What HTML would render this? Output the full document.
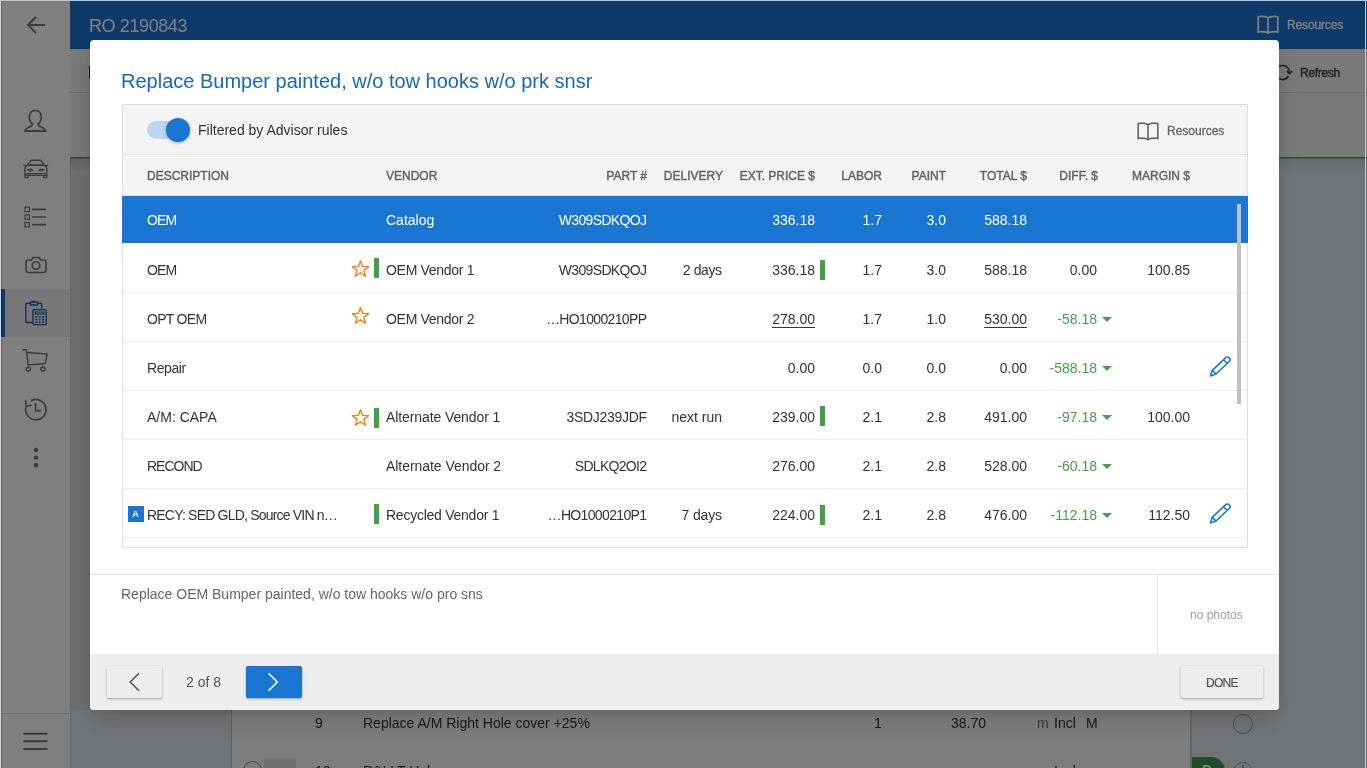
<!DOCTYPE html>
<html><head><meta charset="utf-8">
<style>
*{box-sizing:border-box;margin:0;padding:0}
html,body{width:1367px;height:768px;overflow:hidden;font-family:"Liberation Sans",sans-serif;background:#e5e6e8;position:relative}
.a{position:absolute}
.t{position:absolute;white-space:nowrap}
/* underlying */
#side{left:0;top:0;width:70px;height:768px;background:#fff}
#hdr{left:70px;top:0;width:1297px;height:49px;background:#1a74d0}
#tb{left:70px;top:49px;width:1297px;height:44px;background:#f2f2f2;border-bottom:1px solid #d4d4d4}
#band{left:70px;top:93px;width:1297px;height:65px;background:#f2f2f2;border-bottom:1px solid #4a9f50;box-shadow:0 1px 0 rgba(76,175,80,.45)}
#card{left:231px;top:642px;width:961px;height:128px;background:#fafafa;border-left:1px solid #c4c4c4;border-right:2px solid #c8c8c8}
#ov{left:0;top:0;width:1367px;height:768px;background:rgba(0,0,0,.5)}
/* modal */
#modal{left:90px;top:40px;width:1189px;height:670px;background:linear-gradient(#fff 0,#fff 614px,#eee 614px);border-radius:4px;box-shadow:0 14px 24px -4px rgba(0,0,0,.14),0 2px 12px rgba(0,0,0,.1);overflow:hidden}
#title{left:31px;top:27px;font-size:20px;color:#1567c1;line-height:28px}
#tbl{left:32px;top:64px;width:1126px;height:444px;border:1px solid #dedede;background:#fff}
#tool{left:0;top:0;width:1124px;height:50px;background:#f4f4f4;border-bottom:1px solid #e4e4e4}
#thead{left:0;top:50px;width:1124px;height:41px;background:#f4f4f4;border-bottom:1px solid #dcdcdc}
.th{position:absolute;top:1px;line-height:40px;font-size:12px;color:#666;-webkit-text-stroke:0.45px #666;white-space:nowrap}
.row{position:absolute;left:0;width:1124px;height:49px;border-bottom:1px solid #eeeeee;background:#fff}
.row.sel{background:#1976d2;border-bottom:none;color:#fff}
.c{position:absolute;top:0;line-height:48px;font-size:14px;color:#333;white-space:nowrap}
.sel .c{color:#fff}
.r{text-align:right}
.g{color:#43a047}
.bar{position:absolute;width:5px;height:20px;background:#43a047}
.tri{position:absolute;width:0;height:0;border-left:5px solid transparent;border-right:5px solid transparent;border-top:5px solid #43a047}
.u{text-decoration:underline;text-underline-offset:3px}
#foot{left:0;top:614px;width:1189px;height:56px;background:#eeeeee}
.btn{position:absolute;height:32px;border-radius:2px;box-shadow:0 1px 3px rgba(0,0,0,.25),0 1px 1px rgba(0,0,0,.1)}
</style></head><body>
<div id="root" style="position:absolute;left:0;top:0;width:1367px;height:768px;will-change:transform;overflow:hidden">
<!-- underlying page -->
<div id="side" class="a">
  <svg class="a" style="left:0;top:0" width="70" height="768" viewBox="0 0 70 768" fill="none" stroke="#787878" stroke-width="2">
    <path d="M45 25 H28 M36 17 L28 25 L36 33" stroke-width="2"/>
    <g stroke-width="1.8">
      <path d="M35.2 110.3 C31.6 110.3 29.3 113.3 29.3 117 C29.3 120.3 30.8 122.8 32.4 124 C32.4 125.3 31.8 126 29.2 127.3 C26.6 128.5 25 129.5 25 131 H45.6 C45.6 129.5 44 128.5 41.4 127.3 C38.8 126 38.2 125.3 38.2 124 C39.8 122.8 41.3 120.3 41.3 117 C41.3 113.3 39 110.3 35.2 110.3 Z"/>
    </g>
    <g stroke-width="1.4" stroke-linejoin="round">
      <path d="M27.8 165.3 Q29.3 161.8 30.6 160.8 Q31.2 160.2 32.4 160.2 H39.4 Q40.6 160.2 41.2 160.8 Q42.5 161.8 44 165.3"/>
      <path d="M27.8 165.3 Q25 166.2 25 168.5 V175.3 H46.8 V168.5 Q46.8 166.2 44 165.3 Z"/>
      <path d="M25 175.3 V177.6 H28 V175.3 M46.8 175.3 V177.6 H43.8 V175.3"/>
      <path d="M27.8 165.3 H44 M23.6 164.8 L26.8 165.8 M48.2 164.8 L45 165.8"/>
      <path d="M27.6 169.8 Q30.4 168.2 32.8 170.2 Q30.2 171.6 27.6 169.8 Z M44.2 169.8 Q41.4 168.2 39 170.2 Q41.6 171.6 44.2 169.8 Z" stroke-width="1.2"/>
      <path d="M25.2 173.5 H46.6" stroke-width="1"/>
    </g>
    <g stroke-width="2">
      <rect x="25" y="207.2" width="4.4" height="4.4" stroke-width="1.2"/><rect x="25" y="214.9" width="4.4" height="4.4" stroke-width="1.2"/><rect x="25" y="222.5" width="4.4" height="4.4" stroke-width="1.2"/>
      <path d="M32 209.3 H46 M32 217 H46 M32 224.7 H46" stroke-width="1.7"/>
    </g>
    <g stroke-width="1.5">
      <path d="M26 262.5 Q26 260 28.5 260 H31.5 L33 257.5 H39 L40.5 260 H43.5 Q46 260 46 262.5 V270 Q46 272.5 43.5 272.5 H28.5 Q26 272.5 26 270 Z"/>
      <circle cx="36" cy="265.5" r="3.8"/>
    </g>
    <g stroke-width="1.5" stroke-linejoin="round" stroke-linecap="round">
      <path d="M22.8 349.7 H26.4 L28.2 365.2"/>
      <path d="M26.9 352.4 L47.1 354.1 L45.2 363.4 L28.1 364.9"/>
      <circle cx="28.4" cy="369" r="2"/><circle cx="43" cy="369" r="2"/>
    </g>
    <g stroke-width="1.8">
      <path d="M26.4 405.8 A10.2 10.2 0 1 0 31 400.7" stroke-width="1.6"/>
      <path d="M25.6 400 L26.2 406 L31.8 405.3" stroke-width="1.6" stroke-linejoin="round"/>
      <path d="M35.6 403.2 V410.6 H41.2" stroke-width="1.7"/>
    </g>
    <g fill="#787878" stroke="none">
      <circle cx="36" cy="450" r="2.2"/><circle cx="36" cy="457.6" r="2.2"/><circle cx="36" cy="465.2" r="2.2"/>
    </g>
    <path d="M23.5 733.7 H47.5 M23.5 741.3 H47.5 M23.5 748.9 H47.5" stroke-width="2"/>
  </svg>
</div>
<div class="a" style="left:1px;top:289px;width:69px;height:48px;background:#eeeeee"></div>
<div class="a" style="left:1px;top:289px;width:4px;height:48px;background:#1a70cc"></div>
<svg class="a" style="left:0;top:280px" width="70" height="60" viewBox="0 280 70 60" fill="none" stroke="#1565c0" stroke-width="1.4">
  <path d="M33 322.5 H27 Q25.8 322.5 25.8 321.3 V304.5 Q25.8 303.3 27 303.3 H30.5 M37.5 303.3 H40.5 Q41.7 303.3 41.7 304.5 V308.5"/>
  <path d="M30.5 302 H37.5 V305 H30.5 Z M32.5 302 Q33.5 300.3 35.5 302"/>
  <rect x="33" y="309.6" width="13.2" height="15" rx="1.2"/>
  <rect x="35.4" y="312" width="8.4" height="2" stroke-width="1.1"/>
  <g fill="#1565c0" stroke="none">
    <rect x="35.2" y="316.2" width="2" height="1.6"/><rect x="38.6" y="316.2" width="2" height="1.6"/><rect x="42" y="316.2" width="2" height="1.6"/>
    <rect x="35.2" y="318.8" width="2" height="1.6"/><rect x="38.6" y="318.8" width="2" height="1.6"/><rect x="42" y="318.8" width="2" height="1.6"/>
    <rect x="35.2" y="321.4" width="2" height="1.6"/><rect x="38.6" y="321.4" width="2" height="1.6"/><rect x="42" y="321.4" width="2" height="1.6"/>
  </g>
</svg>
<div class="a" style="left:1px;top:713px;width:69px;height:1px;background:#d8d8d8"></div>
<div id="hdr" class="a">
  <div class="t" style="left:19px;top:13px;font-size:18px;line-height:26px;color:#fff;letter-spacing:-0.4px">RO 2190843</div>
  <svg class="a" style="left:1187px;top:15px" width="22" height="20" viewBox="0 0 22 20" fill="none" stroke="#fff" stroke-width="1.7"><path d="M11 2.8 Q6 0.6 1.2 1.8 V17 Q6 16 11 17.8 Q16 16 20.8 17 V1.8 Q16 0.6 11 2.8 Z M11 2.8 V19"/></svg>
  <div class="t" style="left:1217px;top:1px;font-size:12px;line-height:49px;color:#fff;-webkit-text-stroke:0.3px #fff;letter-spacing:-0.15px">Resources</div>
</div>
<div id="tb" class="a">
  <div class="a" style="left:19px;top:17px;width:2px;height:13px;background:#333"></div>
  <svg class="a" style="left:1204px;top:15px" width="22" height="20" viewBox="0 0 22 20" fill="none" stroke="#444" stroke-width="1.6"><path d="M1.5 8.5 A7 7 0 1 1 15.43 9.47"/><path d="M14.44 12.21 A7 7 0 0 1 1.5 8.5"/><path d="M12.9 7.2 L15.5 9.6 L18.1 7.2" stroke-linejoin="round"/></svg>
  <div class="t" style="left:1230px;top:2px;font-size:12px;line-height:45px;color:#444;-webkit-text-stroke:0.4px #444;letter-spacing:-0.3px">Refresh</div>
</div>
<div id="band" class="a"></div>
<div class="a" style="left:70px;top:158px;width:1297px;height:14px;background:linear-gradient(rgba(0,0,0,.09),rgba(0,0,0,0))"></div>
<div id="card" class="a">
  <div class="t" style="left:83px;top:71px;font-size:14px;line-height:20px;color:#333">9</div>
  <div class="t" style="left:131px;top:71px;font-size:14px;line-height:20px;color:#333">Replace A/M Right Hole cover +25%</div>
  <div class="t" style="left:642px;top:71px;font-size:14px;line-height:20px;color:#333">1</div>
  <div class="t" style="left:719px;top:71px;font-size:14px;line-height:20px;color:#333">38.70</div>
  <div class="t" style="left:805px;top:71px;font-size:14px;line-height:20px;color:#777">m</div>
  <div class="t" style="left:822px;top:71px;font-size:14px;line-height:20px;color:#333">Incl</div>
  <div class="t" style="left:854px;top:71px;font-size:14px;line-height:20px;color:#333">M</div>
  <div class="a" style="left:11px;top:119px;width:19px;height:19px;border-radius:50%;border:1px solid #888"></div>
  <div class="a" style="left:32px;top:117px;width:32px;height:20px;background:#e0e0e0"></div>
  <div class="t" style="left:35px;top:119px;font-size:13px;line-height:26px;color:#999">001</div>
  <div class="t" style="left:83px;top:119px;font-size:14px;line-height:20px;color:#333">10</div>
  <div class="t" style="left:131px;top:119px;font-size:14px;line-height:20px;color:#333">R&amp;I LT Hole</div>
  <div class="t" style="left:822px;top:119px;font-size:14px;line-height:20px;color:#333">Incl</div>
</div>
<div class="a" style="left:1233px;top:714px;width:20px;height:20px;border-radius:50%;border:1.5px solid #999"></div>
<div class="a" style="left:1233px;top:762px;width:20px;height:20px;border-radius:50%;border:1.5px solid #999"></div>
<div class="a" style="left:1192px;top:757px;width:33px;height:30px;border-radius:0 14px 0 0;background:#3d9a4c"></div>
<div class="t" style="left:1202px;top:760px;font-size:14px;line-height:20px;color:#fff;font-weight:bold">D</div>
<div class="a" style="left:1242px;top:765px;width:1.5px;height:8px;background:#999"></div>
<div id="ov" class="a"></div>
<div class="a" style="left:71px;top:158px;width:19px;height:552px;background:rgba(0,0,0,.05)"></div>
<div class="a" style="left:70px;top:158px;width:1px;height:610px;background:rgba(0,0,0,.1)"></div>

<div id="modal" class="a">
  <div id="title" class="t">Replace Bumper painted, w/o tow hooks w/o prk snsr</div>
  <div id="tbl" class="a">
    <div id="tool" class="a">
      <div class="a" style="left:24px;top:16px;width:36px;height:18px;border-radius:9px;background:#bbd6f1"></div>
      <div class="a" style="left:43px;top:13px;width:24px;height:24px;border-radius:12px;background:#1976d2;box-shadow:0 1px 3px rgba(0,0,0,.3)"></div>
      <div class="t" style="left:75px;top:0;line-height:50px;font-size:14px;color:#333">Filtered by Advisor rules</div>
      <svg class="a" style="left:1014px;top:17px" width="22" height="19" viewBox="0 0 22 19" fill="none" stroke="#6a6a6a" stroke-width="1.7"><path d="M11 2.6 Q6 0.5 1.2 1.6 V16.4 Q6 15.4 11 17.2 Q16 15.4 20.8 16.4 V1.6 Q16 0.5 11 2.6 Z M11 2.6 V18.4"/></svg>
      <div class="t" style="left:1044px;top:1px;line-height:50px;font-size:12px;color:#666;-webkit-text-stroke:0.3px #666">Resources</div>
    </div>
    <div id="thead" class="a">
      <div class="th" style="left:24px">DESCRIPTION</div>
      <div class="th" style="left:263px">VENDOR</div>
      <div class="th r" style="right:600px">PART #</div>
      <div class="th r" style="right:524px">DELIVERY</div>
      <div class="th r" style="right:432px">EXT. PRICE $</div>
      <div class="th r" style="right:365px">LABOR</div>
      <div class="th r" style="right:301px">PAINT</div>
      <div class="th r" style="right:220px">TOTAL $</div>
      <div class="th r" style="right:149px">DIFF. $</div>
      <div class="th r" style="right:57px">MARGIN $</div>
    </div>
    <div id="rows" class="a" style="left:0;top:91px;width:1124px;height:352px">
<div class="row sel" style="top:0px;height:47px;left:-1px;width:1126px"><div class="a" style="left:1px;top:0;width:1124px;height:47px"><div class="c" style="left:24px;top:1px;line-height:47px;letter-spacing:-0.9px">OEM</div><div class="c" style="left:263px;top:1px;line-height:47px">Catalog</div><div class="c r" style="right:600.65px;top:1px;line-height:47px;letter-spacing:-0.65px">W309SDKQOJ</div><div class="c r" style="right:432px;top:1px;line-height:47px">336.18</div><div class="c r" style="right:365px;top:1px;line-height:47px">1.7</div><div class="c r" style="right:301px;top:1px;line-height:47px">3.0</div><div class="c r" style="right:220px;top:1px;line-height:47px">588.18</div></div></div>
<div class="row" style="top:48px;height:49px"><div class="c" style="left:24px;top:2px;line-height:48px;letter-spacing:-0.9px">OEM</div><div class="c" style="left:263px;top:2px;line-height:48px;letter-spacing:-0.3px">OEM Vendor 1</div><div class="c r" style="right:600.65px;top:2px;line-height:48px;letter-spacing:-0.65px">W309SDKQOJ</div><div class="c r" style="right:525.4px;top:2px;line-height:48px;letter-spacing:-0.4px">2 days</div><div class="c r" style="right:432px;top:2px;line-height:48px">336.18</div><div class="c r" style="right:365px;top:2px;line-height:48px">1.7</div><div class="c r" style="right:301px;top:2px;line-height:48px">3.0</div><div class="c r" style="right:220px;top:2px;line-height:48px">588.18</div><div class="c r" style="right:150px;top:2px;line-height:48px">0.00</div><div class="c r" style="right:57px;top:2px;line-height:48px">100.85</div><svg class="a" style="left:228px;top:15px" width="19" height="19" viewBox="0 0 19 19"><path d="M9.50 1.70 L11.56 7.47 L17.68 7.64 L12.83 11.38 L14.55 17.26 L9.50 13.80 L4.45 17.26 L6.17 11.38 L1.32 7.64 L7.44 7.47 Z" fill="none" stroke="#f57c00" stroke-width="1.3" stroke-linejoin="round"/></svg><div class="bar" style="left:251px;top:14px"></div><div class="bar" style="left:697px;top:16px"></div></div>
<div class="row" style="top:97px;height:49px"><div class="c" style="left:24px;top:2px;line-height:48px;letter-spacing:-0.7px">OPT OEM</div><div class="c" style="left:263px;top:2px;line-height:48px;letter-spacing:-0.3px">OEM Vendor 2</div><div class="c r" style="right:600.65px;top:2px;line-height:48px;letter-spacing:-0.65px">…HO1000210PP</div><div class="c r" style="right:432px;top:2px;line-height:48px"><span class="u">278.00</span></div><div class="c r" style="right:365px;top:2px;line-height:48px">1.7</div><div class="c r" style="right:301px;top:2px;line-height:48px">1.0</div><div class="c r" style="right:220px;top:2px;line-height:48px"><span class="u">530.00</span></div><div class="c r g" style="right:150px;top:2px;line-height:48px">-58.18</div><div class="tri" style="left:979px;top:24px"></div><svg class="a" style="left:228px;top:13px" width="19" height="19" viewBox="0 0 19 19"><path d="M9.50 1.70 L11.56 7.47 L17.68 7.64 L12.83 11.38 L14.55 17.26 L9.50 13.80 L4.45 17.26 L6.17 11.38 L1.32 7.64 L7.44 7.47 Z" fill="none" stroke="#f57c00" stroke-width="1.3" stroke-linejoin="round"/></svg></div>
<div class="row" style="top:146px;height:49px"><div class="c" style="left:24px;top:2px;line-height:48px;letter-spacing:-0.4px">Repair</div><div class="c r" style="right:432px;top:2px;line-height:48px">0.00</div><div class="c r" style="right:365px;top:2px;line-height:48px">0.0</div><div class="c r" style="right:301px;top:2px;line-height:48px">0.0</div><div class="c r" style="right:220px;top:2px;line-height:48px">0.00</div><div class="c r g" style="right:150px;top:2px;line-height:48px">-588.18</div><div class="tri" style="left:979px;top:24px"></div><svg class="a" style="left:1086px;top:14px" width="22" height="22" viewBox="0 0 22 22"><path d="M1.4 20 L3.3 14.3 L16.5 1.8 A2.6 2.6 0 0 1 20.2 5.5 L7 18 Z M14.5 3.8 L18.2 7.5 M3.3 14.3 L7 18" fill="none" stroke="#1976d2" stroke-width="1.6" stroke-linejoin="round"/></svg></div>
<div class="row" style="top:195px;height:49px"><div class="c" style="left:24px;top:2px;line-height:48px">A/M: CAPA</div><div class="c" style="left:263px;top:2px;line-height:48px;letter-spacing:-0.1px">Alternate Vendor 1</div><div class="c r" style="right:600.3px;top:2px;line-height:48px;letter-spacing:-0.3px">3SDJ239JDF</div><div class="c r" style="right:525px;top:2px;line-height:48px">next run</div><div class="c r" style="right:432px;top:2px;line-height:48px">239.00</div><div class="c r" style="right:365px;top:2px;line-height:48px">2.1</div><div class="c r" style="right:301px;top:2px;line-height:48px">2.8</div><div class="c r" style="right:220px;top:2px;line-height:48px">491.00</div><div class="c r g" style="right:150px;top:2px;line-height:48px">-97.18</div><div class="tri" style="left:979px;top:24px"></div><div class="c r" style="right:57px;top:2px;line-height:48px">100.00</div><svg class="a" style="left:228px;top:17px" width="19" height="19" viewBox="0 0 19 19"><path d="M9.50 1.70 L11.56 7.47 L17.68 7.64 L12.83 11.38 L14.55 17.26 L9.50 13.80 L4.45 17.26 L6.17 11.38 L1.32 7.64 L7.44 7.47 Z" fill="none" stroke="#f57c00" stroke-width="1.3" stroke-linejoin="round"/></svg><div class="bar" style="left:251px;top:17px"></div><div class="bar" style="left:697px;top:15px"></div></div>
<div class="row" style="top:244px;height:49px"><div class="c" style="left:24px;top:2px;line-height:48px;letter-spacing:-1.0px">RECOND</div><div class="c" style="left:263px;top:2px;line-height:48px;letter-spacing:-0.05px">Alternate Vendor 2</div><div class="c r" style="right:600.7px;top:2px;line-height:48px;letter-spacing:-0.7px">SDLKQ2OI2</div><div class="c r" style="right:432px;top:2px;line-height:48px">276.00</div><div class="c r" style="right:365px;top:2px;line-height:48px">2.1</div><div class="c r" style="right:301px;top:2px;line-height:48px">2.8</div><div class="c r" style="right:220px;top:2px;line-height:48px">528.00</div><div class="c r g" style="right:150px;top:2px;line-height:48px">-60.18</div><div class="tri" style="left:979px;top:24px"></div></div>
<div class="row" style="top:293px;height:49px"><div class="c" style="left:24px;top:2px;line-height:48px;letter-spacing:-0.8px">RECY: SED GLD, Source VIN n…</div><div class="c" style="left:263px;top:2px;line-height:48px;letter-spacing:-0.25px">Recycled Vendor 1</div><div class="c r" style="right:600.65px;top:2px;line-height:48px;letter-spacing:-0.65px">…HO1000210P1</div><div class="c r" style="right:525.15px;top:2px;line-height:48px;letter-spacing:-0.15px">7 days</div><div class="c r" style="right:432px;top:2px;line-height:48px">224.00</div><div class="c r" style="right:365px;top:2px;line-height:48px">2.1</div><div class="c r" style="right:301px;top:2px;line-height:48px">2.8</div><div class="c r" style="right:220px;top:2px;line-height:48px">476.00</div><div class="c r g" style="right:150px;top:2px;line-height:48px">-112.18</div><div class="tri" style="left:979px;top:24px"></div><div class="c r" style="right:57px;top:2px;line-height:48px">112.50</div><div class="bar" style="left:251px;top:15px"></div><div class="bar" style="left:697px;top:16px"></div><svg class="a" style="left:1086px;top:14px" width="22" height="22" viewBox="0 0 22 22"><path d="M1.4 20 L3.3 14.3 L16.5 1.8 A2.6 2.6 0 0 1 20.2 5.5 L7 18 Z M14.5 3.8 L18.2 7.5 M3.3 14.3 L7 18" fill="none" stroke="#1976d2" stroke-width="1.6" stroke-linejoin="round"/></svg><div class="a" style="left:4.5px;top:17.0px;width:16px;height:16px;background:#1976d2;color:#fff;font-size:9px;font-weight:bold;line-height:17px;text-align:center">A</div></div>
</div><!--rows-end-->
    <div class="a" style="left:1114px;top:99px;width:4px;height:200px;background:#c1c1c1"></div>
  </div>
  <div class="a" style="left:0;top:534px;width:1189px;height:1px;background:#e0e0e0"></div>
  <div class="t" style="left:31px;top:544px;font-size:14px;color:#666;line-height:20px">Replace OEM Bumper painted, w/o tow hooks w/o pro sns</div>
  <div class="a" style="left:1067px;top:535px;width:1px;height:79px;background:#e0e0e0"></div>
  <div class="t" style="left:1100px;top:565px;font-size:12px;color:#9e9e9e;line-height:20px">no photos</div>
  <div id="foot" class="a">
    <div class="btn" style="left:17px;top:12px;width:55px;background:#eeeeee"><svg class="a" style="left:0;top:0" width="55" height="32" viewBox="0 0 55 32"><path d="M32 7.2 L23.2 16 L32 24.8" fill="none" stroke="#555" stroke-width="1.6"/></svg></div>
    <div class="t" style="left:96px;top:12px;line-height:32px;font-size:14px;color:#555">2 of 8</div>
    <div class="btn" style="left:156px;top:12px;width:56px;background:#1976d2"><svg class="a" style="left:0;top:0" width="56" height="32" viewBox="0 0 56 32"><path d="M22.5 7.2 L31.3 16 L22.5 24.8" fill="none" stroke="#fff" stroke-width="1.6"/></svg></div>
    <div class="btn" style="left:1091px;top:12px;width:82px;background:#eeeeee"></div>
    <div class="t" style="left:1116px;top:13px;line-height:32px;font-size:12px;color:#555;letter-spacing:-0.7px;-webkit-text-stroke:0.2px #555">DONE</div>
  </div>
</div>
<div class="a" style="left:0;top:0;width:1367px;height:1px;background:#b6c8dc"></div>
<div class="a" style="left:0;top:1px;width:1px;height:767px;background:#d6d6d6"></div>
<div class="a" style="left:1px;top:1px;width:1px;height:767px;background:rgba(0,0,0,.18)"></div>
<div class="a" style="left:1365px;top:1px;width:1px;height:767px;background:#c8c8c8"></div>
</div>
</body></html>
